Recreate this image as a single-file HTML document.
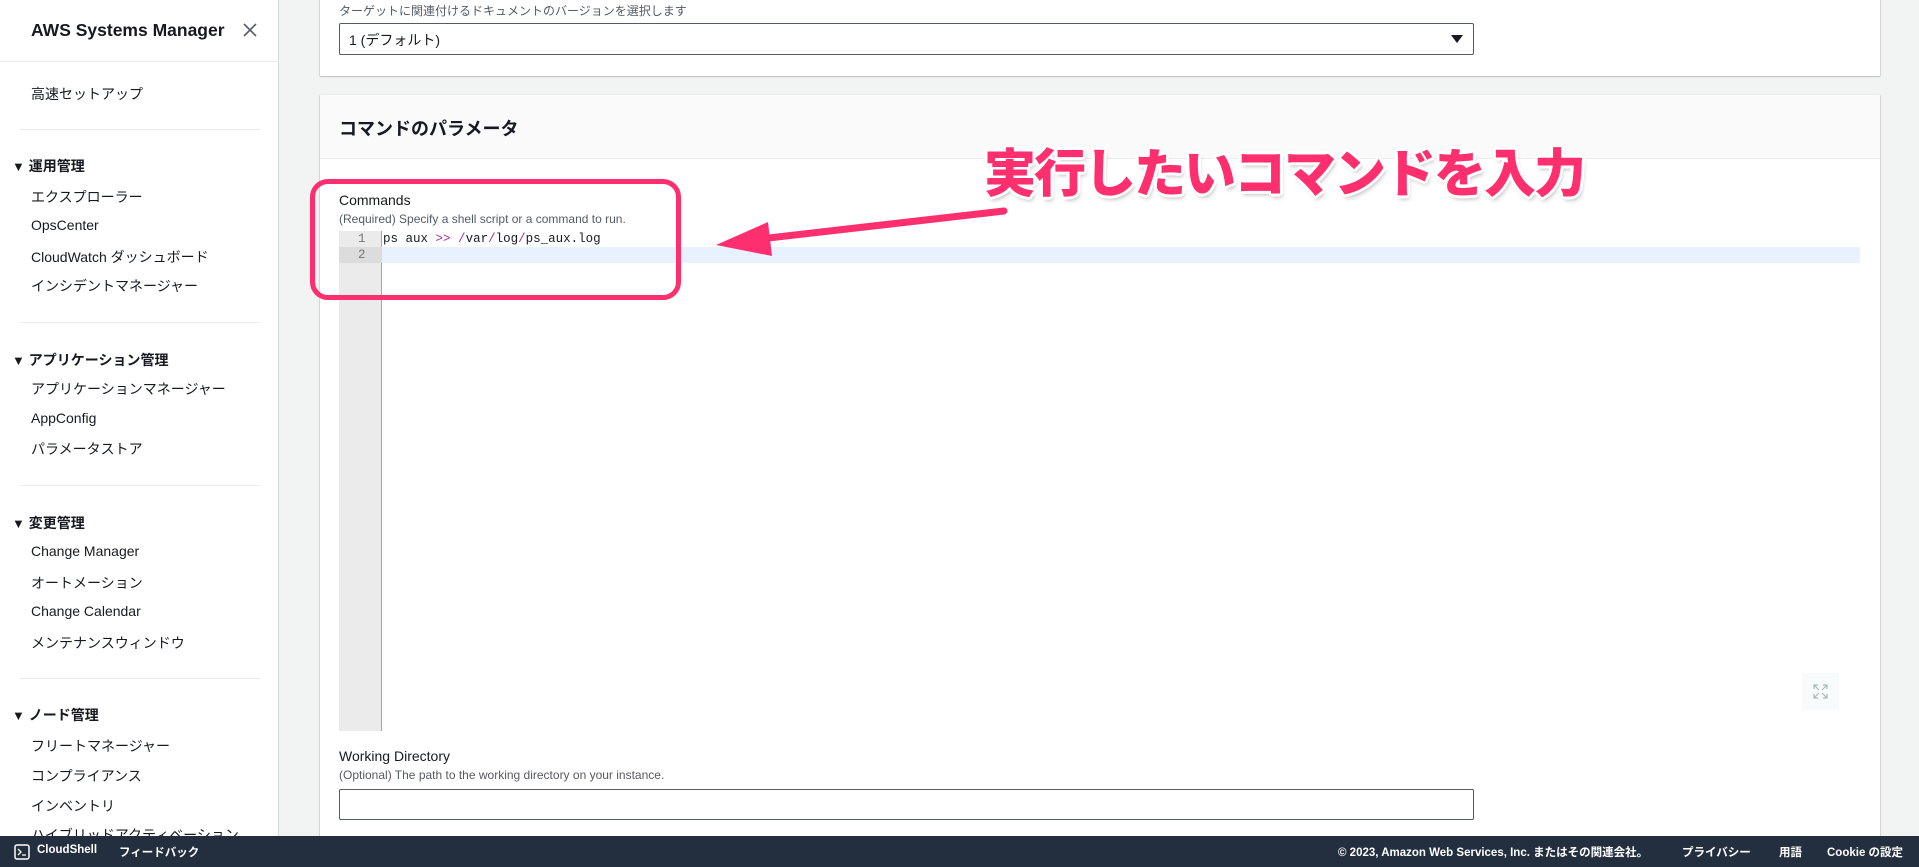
<!DOCTYPE html>
<html><head><meta charset="utf-8"><style>
*{box-sizing:border-box;margin:0;padding:0}
body{width:1919px;height:867px;overflow:hidden;background:#f2f3f3;font-family:"Liberation Sans","Noto Sans CJK JP",sans-serif;color:#16191f;position:relative}
.side{position:absolute;left:0;top:0;width:279px;height:867px;background:#fff;border-right:1px solid #d5dbdb}
.a{position:absolute;font-size:14px;color:#16191f;white-space:nowrap}
.h{font-weight:bold}
.div{position:absolute;left:20px;width:240px;height:1px;background:#eaeded}
.panel{position:absolute;left:320px;width:1560px;background:#fff;box-shadow:0 1px 1px rgba(0,28,36,.2),1px 0 1px rgba(0,28,36,.1),-1px 0 1px rgba(0,28,36,.1)}
.foot{position:absolute;left:0;top:836px;width:1919px;height:31px;background:#232f3e;color:#fff;font-size:11.5px;font-weight:bold}
.foot span{position:absolute;top:8px;white-space:nowrap}
.mono{font-family:"Liberation Mono",monospace;font-size:12.5px}
.tri{font-size:13px}
</style></head><body>
<div class="side">
<div class="a h" style="left:31px;top:20px;font-size:17.5px">AWS Systems Manager</div>
<svg style="position:absolute;left:243px;top:23px" width="14" height="14" viewBox="0 0 14 14"><path d="M1 1l12 12M13 1L1 13" stroke="#545b64" stroke-width="1.6"/></svg>
<div style="position:absolute;left:0;top:61px;width:279px;height:1px;background:#eaeded"></div>
<div class="a" style="left:31px;top:84px">高速セットアップ</div>
<div class="div" style="top:129px"></div>
<div class="a h" style="left:12px;top:156px"><span class="tri">▼</span> 運用管理</div>
<div class="a" style="left:31px;top:187px">エクスプローラー</div>
<div class="a" style="left:31px;top:217px">OpsCenter</div>
<div class="a" style="left:31px;top:247px">CloudWatch ダッシュボード</div>
<div class="a" style="left:31px;top:276px">インシデントマネージャー</div>
<div class="div" style="top:322px"></div>
<div class="a h" style="left:12px;top:350px"><span class="tri">▼</span> アプリケーション管理</div>
<div class="a" style="left:31px;top:379px">アプリケーションマネージャー</div>
<div class="a" style="left:31px;top:410px">AppConfig</div>
<div class="a" style="left:31px;top:439px">パラメータストア</div>
<div class="div" style="top:485px"></div>
<div class="a h" style="left:12px;top:513px"><span class="tri">▼</span> 変更管理</div>
<div class="a" style="left:31px;top:543px">Change Manager</div>
<div class="a" style="left:31px;top:573px">オートメーション</div>
<div class="a" style="left:31px;top:603px">Change Calendar</div>
<div class="a" style="left:31px;top:633px">メンテナンスウィンドウ</div>
<div class="div" style="top:678px"></div>
<div class="a h" style="left:12px;top:705px"><span class="tri">▼</span> ノード管理</div>
<div class="a" style="left:31px;top:736px">フリートマネージャー</div>
<div class="a" style="left:31px;top:766px">コンプライアンス</div>
<div class="a" style="left:31px;top:796px">インベントリ</div>
<div class="a" style="left:31px;top:825px">ハイブリッドアクティベーション</div>
</div>

<div class="panel" style="top:-10px;height:86px">
<div class="a" style="left:19px;top:12px;font-size:12px;color:#545b64">ターゲットに関連付けるドキュメントのバージョンを選択します</div>
<div style="position:absolute;left:19px;top:33px;width:1135px;height:32px;border:1px solid #545b64;border-radius:2px"></div>
<div class="a" style="left:29px;top:40px">1 (デフォルト)</div>
<div style="position:absolute;left:1131px;top:45px;width:0;height:0;border-left:6px solid transparent;border-right:6px solid transparent;border-top:8px solid #16191f"></div>
</div>

<div class="panel" style="top:95px;height:760px">
<div style="position:absolute;left:0;top:0;width:1560px;height:64px;background:#fafafa;border-bottom:1px solid #eaeded"></div>
<div class="a h" style="left:19px;top:20px;font-size:18px">コマンドのパラメータ</div>
<div class="a" style="left:19px;top:97px;font-size:14px">Commands</div>
<div class="a" style="left:19px;top:117px;font-size:12px;color:#545b64">(Required) Specify a shell script or a command to run.</div>
<div style="position:absolute;left:19px;top:136px;width:43px;height:500px;background:#ebebeb;border-right:1px solid #aaa"></div>
<div style="position:absolute;left:62px;top:152px;width:1478px;height:16px;background:#e8f2fe"></div>
<div style="position:absolute;left:19px;top:152px;width:43px;height:16px;background:#dcdcdc"></div>
<div class="a mono" style="left:38px;top:137px;color:#777">1</div>
<div class="a mono" style="left:38px;top:153px;color:#777">2</div>
<div class="a mono" style="left:63px;top:137px">ps aux <span style="color:#a0319a">&gt;&gt;</span> <span style="color:#a0319a">/</span>var<span style="color:#a0319a">/</span>log<span style="color:#a0319a">/</span>ps_aux.log</div>
<div style="position:absolute;left:1482px;top:578px;width:37px;height:37px;background:#f8fbfc"></div>
<svg style="position:absolute;left:1493px;top:589px" width="15" height="15" viewBox="0 0 15 15" fill="none" stroke="#aab7b8" stroke-width="1.2"><path d="M1 5V1h4M1 1l5 5M14 5V1h-4M14 1L9 6M1 10v4h4M1 14l5-5M14 10v4h-4M14 14l-5-5"/></svg>
<div class="a" style="left:19px;top:653px;font-size:14px">Working Directory</div>
<div class="a" style="left:19px;top:673px;font-size:12px;color:#545b64">(Optional) The path to the working directory on your instance.</div>
<div style="position:absolute;left:19px;top:694px;width:1135px;height:31px;border:1px solid #545b64;border-radius:2px"></div>
</div>

<div style="position:absolute;left:310px;top:179px;width:371px;height:121px;border:5px solid #fd2f6e;border-radius:18px"></div>
<svg style="position:absolute;left:0;top:0" width="1919" height="867">
<line x1="1004" y1="211" x2="760" y2="239" stroke="#fd2f6e" stroke-width="7" stroke-linecap="round"/>
<polygon points="716,245 768,222 772,256" fill="#fd2f6e"/>
</svg>
<div class="a" style="left:984px;top:132px;font-size:52px;font-weight:900;color:#fd2f6e;text-shadow:3px 0 #fff,-3px 0 #fff,0 3px #fff,0 -3px #fff,2px 2px #fff,-2px -2px #fff,2px -2px #fff,-2px 2px #fff,2px 4px 4px rgba(0,0,0,.25);letter-spacing:-2px">実行したいコマンドを入力</div>

<div class="foot">
<svg style="position:absolute;left:14px;top:8px" width="16" height="16" viewBox="0 0 16 16"><rect x="1" y="1" width="14" height="14" rx="2" fill="none" stroke="#fff" stroke-width="1.5"/><path d="M4 5l3 3-3 3M8 11h4" stroke="#fff" stroke-width="1.3" fill="none"/></svg>
<span style="left:37px">CloudShell</span>
<span style="left:119px">フィードバック</span>
<span style="left:1338px">© 2023, Amazon Web Services, Inc. またはその関連会社。</span>
<span style="left:1682px">プライバシー</span>
<span style="left:1779px">用語</span>
<span style="left:1827px">Cookie の設定</span>
</div>
</body></html>
